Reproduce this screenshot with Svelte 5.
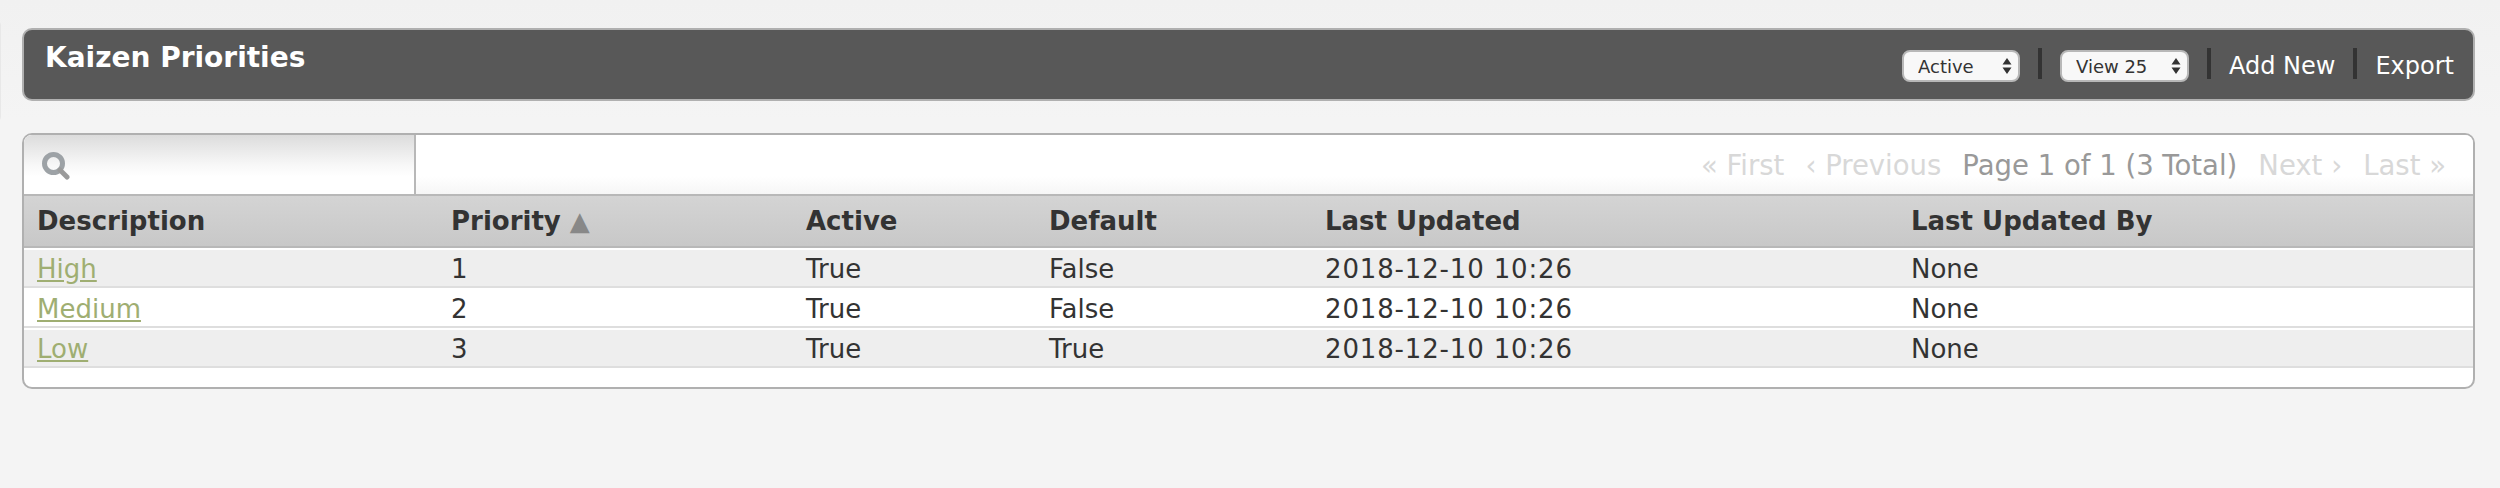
<script>
	const rows = [
		{ description: 'High', priority: 1, active: 'True', isDefault: 'False', updated: '2018-12-10 10:26', by: 'None' },
		{ description: 'Medium', priority: 2, active: 'True', isDefault: 'False', updated: '2018-12-10 10:26', by: 'None' },
		{ description: 'Low', priority: 3, active: 'True', isDefault: 'True', updated: '2018-12-10 10:26', by: 'None' }
	];
</script>

<main>
	<div class="side-tab"></div>

	<header class="title-bar">
		<h1>Kaizen Priorities</h1>
		<div class="actions">
			<span class="select-wrap active-select">
				<select>
					<option>Active</option>
					<option>Inactive</option>
				</select>
				<svg class="arrows" viewBox="0 0 10 16" aria-hidden="true"><path d="M5 0 9.5 6.5H.5zM5 16 .5 9.5h9z" /></svg>
			</span>
			<span class="divider"></span>
			<span class="select-wrap view-select">
				<select>
					<option>View 25</option>
					<option>View 50</option>
				</select>
				<svg class="arrows" viewBox="0 0 10 16" aria-hidden="true"><path d="M5 0 9.5 6.5H.5zM5 16 .5 9.5h9z" /></svg>
			</span>
			<span class="divider"></span>
			<a href="#add">Add New</a>
			<span class="divider"></span>
			<a href="#export">Export</a>
		</div>
	</header>

	<section class="panel">
		<div class="toolbar">
			<div class="search">
				<svg viewBox="0 0 30 30" aria-hidden="true">
					<circle cx="12.5" cy="12.5" r="9" fill="none" stroke="#9da2a6" stroke-width="5" />
					<path d="M19 19 26 26" stroke="#9a9a9a" stroke-width="5" stroke-linecap="round" />
				</svg>
			</div>
			<nav class="pager">
				<span class="off">« First</span>
				<span class="off">‹ Previous</span>
				<span class="page">Page 1 of 1 (3 Total)</span>
				<span class="off">Next ›</span>
				<span class="off">Last »</span>
			</nav>
		</div>

		<table>
			<colgroup>
				<col style="width: 414px" />
				<col style="width: 355px" />
				<col style="width: 243px" />
				<col style="width: 276px" />
				<col style="width: 586px" />
				<col />
			</colgroup>
			<thead>
				<tr>
					<th>Description</th>
					<th>Priority <span class="sort">▲</span></th>
					<th>Active</th>
					<th>Default</th>
					<th>Last Updated</th>
					<th>Last Updated By</th>
				</tr>
			</thead>
			<tbody>
				{#each rows as row}
					<tr>
						<td><a href="#row">{row.description}</a></td>
						<td>{row.priority}</td>
						<td>{row.active}</td>
						<td>{row.isDefault}</td>
						<td class="date">{row.updated}</td>
						<td>{row.by}</td>
					</tr>
				{/each}
			</tbody>
		</table>
	</section>
</main>

<style>
	:global(body) {
		margin: 0;
		background: #f4f4f4;
	}

	main {
		position: relative;
		padding: 28px 25px 0 22px;
		height: 460px;
		font-family: "DejaVu Sans", Verdana, sans-serif;
		color: #333;
		background: linear-gradient(#f1f1f1, #f4f4f4 120px);
		overflow: hidden;
	}

	.side-tab {
		position: absolute;
		left: -10px;
		top: 20px;
		width: 11px;
		height: 102px;
		border-radius: 6px;
		background: #e8e8e8;
	}

	.title-bar {
		display: flex;
		justify-content: space-between;
		box-sizing: border-box;
		height: 73px;
		padding: 9px 19px 0 21px;
		background: #585858;
		border: 2px solid #b0b0b0;
		border-radius: 10px;
		color: #fff;
	}

	h1 {
		margin: 0;
		font-size: 28px;
		line-height: 38px;
		font-weight: bold;
	}

	.actions {
		display: flex;
		align-items: flex-start;
		padding-top: 9px;
	}

	.actions a {
		color: #fff;
		text-decoration: none;
		font-size: 24px;
		line-height: 36px;
	}

	.divider {
		width: 4px;
		height: 31px;
		margin: 0 18px;
		background: #333;
	}

	.select-wrap {
		position: relative;
		display: block;
		margin-top: 2px;
	}

	select {
		display: block;
		box-sizing: border-box;
		height: 32px;
		padding: 0 0 0 14px;
		appearance: none;
		background: #f8f8f8;
		border: 2px solid #b8b8b8;
		border-radius: 8px;
		font-family: inherit;
		font-size: 18px;
		color: #333;
	}

	.active-select select {
		width: 118px;
	}

	.view-select select {
		width: 129px;
	}

	.arrows {
		position: absolute;
		top: 8px;
		right: 8px;
		width: 10px;
		height: 16px;
		fill: #333;
	}

	.panel {
		margin-top: 32px;
		height: 256px;
		box-sizing: border-box;
		background: #fff;
		border: 2px solid #b0b0b0;
		border-radius: 10px;
		overflow: hidden;
	}

	.toolbar {
		display: flex;
		justify-content: space-between;
		height: 59px;
		background: linear-gradient(#fff 70%, #f6f6f6);
	}

	.search {
		box-sizing: border-box;
		width: 392px;
		padding: 16px 0 0 17px;
		background: linear-gradient(#dcdcdc, #f7f7f7 50%, #fff 70%);
		border-right: 2px solid #b8b8b8;
	}

	.search svg {
		display: block;
		width: 30px;
		height: 30px;
		filter: blur(0.5px);
	}

	.pager {
		display: flex;
		gap: 21px;
		padding: 12px 27px 0 0;
		font-size: 27.5px;
		line-height: 36px;
	}

	.off {
		color: #d8d8d8;
	}

	.page {
		color: #999;
	}

	table {
		width: 100%;
		table-layout: fixed;
		border-collapse: separate;
		border-spacing: 0;
		font-size: 26px;
	}

	th {
		box-sizing: border-box;
		height: 54px;
		padding: 0 0 0 13px;
		text-align: left;
		font-size: 26px;
		background: linear-gradient(#d4d4d4, #c8c8c8);
		border-top: 2px solid #b8b8b8;
		border-bottom: 2px solid #b8b8b8;
	}

	.sort {
		font-size: 26px;
		color: #888;
	}

	td {
		box-sizing: border-box;
		height: 40px;
		padding: 1px 0 0 13px;
		border-top: 2px solid #fff;
		border-bottom: 2px solid #dedede;
		white-space: nowrap;
	}

	tbody tr:nth-child(odd) td {
		background: #eee;
		background-clip: padding-box;
	}

	.date {
		letter-spacing: 0.85px;
	}

	td a {
		color: #9fae72;
	}
</style>
